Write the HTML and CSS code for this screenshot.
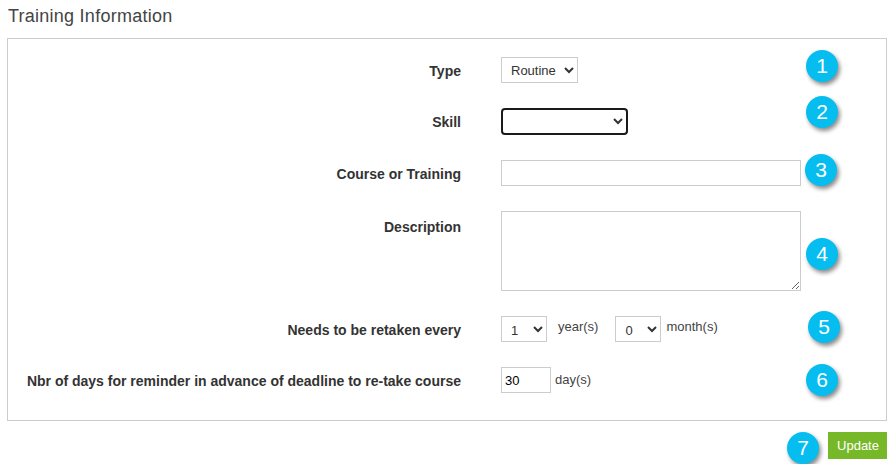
FILE: index.html
```html
<!DOCTYPE html>
<html lang="en">
  <head>
    <meta charset="utf-8" />
    <meta name="viewport" content="width=device-width, initial-scale=1.0" />
    <title>Training Information</title>
    <link rel="stylesheet" href="styles.css">
  </head>

  <body>
    <h2 class="title">Training Information</h2>

    <!-- ______FORM______ -->
    <section class="panel">
      <div class="form-grid">
        <label class="lbl" for="type">Type</label>
        <div class="ctl">
          <select id="type" class="sel sel-type">
            <option>Routine</option>
          </select>
        </div>

        <label class="lbl" for="skill">Skill</label>
        <div class="ctl">
          <select id="skill" class="sel sel-skill">
            <option></option>
          </select>
        </div>

        <label class="lbl" for="course">Course or Training</label>
        <div class="ctl">
          <input id="course" class="txt txt-course" type="text" />
        </div>

        <label class="lbl lbl-top" for="desc">Description</label>
        <div class="ctl">
          <textarea id="desc" class="txt txt-desc"></textarea>
        </div>

        <label class="lbl">Needs to be retaken every</label>
        <div class="ctl ctl-inline">
          <select class="sel sel-small">
            <option>1</option>
          </select>
          <span class="unit unit-year">year(s)</span>
          <select class="sel sel-small">
            <option>0</option>
          </select>
          <span class="unit unit-month">month(s)</span>
        </div>

        <label class="lbl" for="days">Nbr of days for reminder in advance of deadline to re-take course</label>
        <div class="ctl ctl-inline">
          <input id="days" class="txt txt-days" type="text" value="30" />
          <span class="unit unit-day">day(s)</span>
        </div>
      </div>

      <!-- callout badges -->
      <span class="badge b1">1</span>
      <span class="badge b2">2</span>
      <span class="badge b3">3</span>
      <span class="badge b4">4</span>
      <span class="badge b5">5</span>
      <span class="badge b6">6</span>
    </section>

    <footer class="actions">
      <span class="badge b7">7</span>
      <button class="btn-update">Update</button>
    </footer>
  </body>
</html>
```

FILE: styles.css
```css
body {
  margin: 0 7px;
  font-family: "Liberation Sans", Arial, sans-serif;
  color: #333;
  background: #fff;
}

.title {
  margin: 6px 0 12px 1px;
  font-size: 18px;
  line-height: 20px;
  font-weight: normal;
  letter-spacing: 0.25px;
  color: #444;
}

/*_____PANEL_____*/

.panel {
  position: relative;
  border: 1px solid #ccc;
  padding: 18px 0 27px;
}

.form-grid {
  display: grid;
  grid-template-columns: 493px 1fr;
  row-gap: 25px;
  align-items: start;
}

.lbl {
  padding-right: 40px;
  margin-bottom: -3px;
  text-align: right;
  font-size: 14px;
  font-weight: bold;
  line-height: 28px;
  color: #333;
}

.lbl-top {
  padding-top: 2px;
}

.ctl-inline {
  display: flex;
  align-items: center;
}

.sel {
  box-sizing: border-box;
  height: 26px;
  border: 1px solid #ccc;
  border-radius: 0;
  background: #fff;
  font-family: "Liberation Sans", Arial, sans-serif;
  font-size: 13px;
  color: #333;
  padding-left: 5px;
}

.sel-type {
  width: 77px;
}

.sel-skill {
  width: 127px;
  height: 27px;
  border: 2px solid #1a1a1a;
  border-radius: 4px;
}

.sel-small {
  width: 46px;
  padding-top: 3px;
}

.txt {
  box-sizing: border-box;
  display: block;
  border: 1px solid #ccc;
  font-family: "Liberation Sans", Arial, sans-serif;
  font-size: 13px;
  color: #000;
  margin: 0;
}

.txt-course {
  width: 300px;
  height: 26px;
}

.txt-desc {
  width: 300px;
  height: 80px;
  resize: both;
}

.txt-days {
  width: 50px;
  height: 26px;
  padding: 0 3px;
}

.unit {
  font-size: 13px;
  color: #444;
  margin-top: -5px;
}

.unit-year {
  margin: -5px 17px 0 11px;
}

.unit-month {
  margin-left: 5px;
}

.unit-day {
  margin-left: 4px;
  margin-top: -2px;
}

/*_____BADGES_____*/

.badge {
  display: flex;
  align-items: center;
  justify-content: center;
  width: 32px;
  height: 32px;
  border-radius: 50%;
  background: #06bdf0;
  color: #fff;
  font-size: 21px;
  box-shadow: 2px 3px 4px rgba(0, 0, 0, 0.45);
}

.panel .badge {
  position: absolute;
}

.b1 { left: 798px; top: 11px; }
.b2 { left: 798px; top: 57px; }
.b3 { left: 797px; top: 115px; }
.b4 { left: 798px; top: 199px; }
.b5 { left: 800px; top: 272px; }
.b6 { left: 798px; top: 325px; }

/*_____ACTIONS_____*/

.actions {
  display: flex;
  justify-content: flex-end;
  align-items: flex-start;
  gap: 9px;
  margin: 11px -1px 0 0;
}

.btn-update {
  width: 60px;
  height: 27px;
  border: none;
  background: #77b829;
  color: #fff;
  font-family: "Liberation Sans", Arial, sans-serif;
  font-size: 13px;
  padding: 0;
  cursor: pointer;
}
```
